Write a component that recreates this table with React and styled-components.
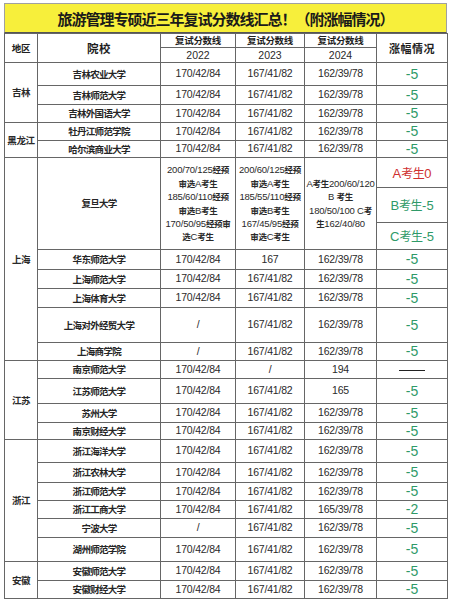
import React from "react";
import styled, { createGlobalStyle } from "styled-components";

const GlobalStyle = createGlobalStyle`
  html, body {
    margin: 0;
    padding: 0;
    background: #ffffff;
  }
  body {
    font-family: "Noto Sans CJK SC", sans-serif;
    color: #222222;
  }
`;

const NUM_FONT = `"Liberation Sans", "Noto Sans CJK SC", sans-serif`;
const CJK_FONT = `"Noto Sans CJK SC", sans-serif`;

const Page = styled.div`
  width: 451px;
  padding: 3px 4px 0 4px;
  box-sizing: border-box;
`;

const Title = styled.div`
  height: 30px;
  box-sizing: border-box;
  background: #f7ef3b;
  border: 1.5px solid #a0a0a0;
  border-bottom: 1px solid #555555;
  display: flex;
  align-items: center;
  justify-content: center;
  font-family: ${CJK_FONT};
  font-weight: 700;
  font-size: 15px;
  letter-spacing: -1px;
  color: #1a1a1a;
`;

const Table = styled.table`
  width: 443px;
  table-layout: fixed;
  border-collapse: collapse;
  border: 1.5px solid #a0a0a0;
  border-top: none;
`;

const Row = styled.tr`
  height: ${(p) => p.$h}px;
`;

const Cell = styled.td`
  padding: 0;
  border: 1px solid #666666;
  text-align: center;
  vertical-align: middle;
  line-height: 13px;
  white-space: nowrap;
`;

const HeadCell = styled(Cell)`
  font-family: ${CJK_FONT};
  font-weight: 700;
  font-size: ${(p) => p.$size || 9.5}px;
  letter-spacing: ${(p) => (p.$size > 10 ? 0.5 : -0.3)}px;
  color: #1e1e1e;
`;

const YearCell = styled(Cell)`
  font-family: ${NUM_FONT};
  font-size: 10.5px;
  color: #2a2a2a;
`;

const RegionCell = styled(Cell)`
  font-family: ${CJK_FONT};
  font-weight: 700;
  font-size: 9.5px;
  letter-spacing: -0.4px;
  color: #2a2a2a;
`;

const SchoolCell = styled(Cell)`
  font-family: ${CJK_FONT};
  font-weight: 700;
  font-size: 9.5px;
  letter-spacing: -0.7px;
  color: #262626;
`;

const ScoreCell = styled(Cell)`
  font-family: ${NUM_FONT};
  font-size: ${(p) => (p.$multi ? 9.5 : 10.5)}px;
  letter-spacing: -0.2px;
  line-height: 13.4px;
  color: #2a2a2a;
`;

const Han = styled.span`
  font-family: ${CJK_FONT};
  font-weight: 700;
  font-size: 8.5px;
  letter-spacing: -0.3px;
`;

const ChangeCell = styled(Cell)`
  font-family: ${NUM_FONT};
  font-size: ${(p) => (p.$small ? 13 : 14)}px;
  color: ${(p) => (p.$tone === "red" ? "#cf2f2f" : "#2f9a68")};
`;

const ChangeHan = styled.span`
  font-family: ${CJK_FONT};
  font-size: 12px;
  letter-spacing: -0.5px;
`;

const Dash = styled.span`
  display: inline-block;
  width: 26px;
  height: 1.5px;
  background: #222222;
  vertical-align: middle;
`;

const isHan = (s) => /[\u4e00-\u9fff]/.test(s);

const mix = (text, Wrap) =>
  text
    .split(/([\u4e00-\u9fff]+)/)
    .filter(Boolean)
    .map((part, i) => (isHan(part) ? <Wrap key={i}>{part}</Wrap> : part));

const std = ["170/42/84", "167/41/82", "162/39/78"];

const groups = [
  {
    region: "吉林",
    rows: [
      { school: "吉林农业大学", scores: std, change: "-5", h: 23 },
      { school: "吉林师范大学", scores: std, change: "-5", h: 19 },
      { school: "吉林外国语大学", scores: std, change: "-5", h: 18 },
    ],
  },
  {
    region: "黑龙江",
    rows: [
      { school: "牡丹江师范学院", scores: std, change: "-5", h: 18 },
      { school: "哈尔滨商业大学", scores: std, change: "-5", h: 17 },
    ],
  },
  {
    region: "上海",
    rows: [
      {
        school: "复旦大学",
        scores: [
          ["200/70/125经预", "审选A考生", "185/60/110经预", "审选B考生", "170/50/95经预审", "选C考生"],
          ["200/60/125经预", "审选A考生", "185/55/110经预", "审选B考生", "167/45/95经预", "审选C考生"],
          ["A考生200/60/120", "B 考生", "180/50/100 C考", "生162/40/80"],
        ],
        multi: [
          { text: "A考生0", tone: "red", h: 30 },
          { text: "B考生-5", tone: "green", h: 35 },
          { text: "C考生-5", tone: "green", h: 27 },
        ],
      },
      { school: "华东师范大学", scores: ["170/42/84", "167", "162/39/78"], change: "-5", h: 20 },
      { school: "上海师范大学", scores: std, change: "-5", h: 19 },
      { school: "上海体育大学", scores: std, change: "-5", h: 19 },
      { school: "上海对外经贸大学", scores: ["/", "167/41/82", "162/39/78"], change: "-5", h: 35 },
      { school: "上海商学院", scores: ["/", "167/41/82", "162/39/78"], change: "-5", h: 18 },
    ],
  },
  {
    region: "江苏",
    rows: [
      { school: "南京师范大学", scores: ["170/42/84", "/", "194"], change: null, h: 18 },
      { school: "江苏师范大学", scores: ["170/42/84", "167/41/82", "165"], change: "-5", h: 25 },
      { school: "苏州大学", scores: std, change: "-5", h: 19 },
      { school: "南京财经大学", scores: std, change: "-5", h: 17 },
    ],
  },
  {
    region: "浙江",
    rows: [
      { school: "浙江海洋大学", scores: std, change: "-5", h: 23 },
      { school: "浙江农林大学", scores: std, change: "-5", h: 20 },
      { school: "浙江师范大学", scores: std, change: "-5", h: 18 },
      { school: "浙江工商大学", scores: ["170/42/84", "167/41/82", "165/39/78"], change: "-2", h: 18 },
      { school: "宁波大学", scores: ["/", "167/41/82", "162/39/78"], change: "-5", h: 19 },
      { school: "湖州师范学院", scores: std, change: "-5", h: 24 },
    ],
  },
  {
    region: "安徽",
    rows: [
      { school: "安徽师范大学", scores: std, change: "-5", h: 19 },
      { school: "安徽财经大学", scores: std, change: "-5", h: 18 },
    ],
  },
];

const spanOf = (rows) => rows.reduce((n, r) => n + (r.multi ? r.multi.length : 1), 0);

const ScoreLines = ({ lines }) =>
  lines.map((line, i) => (
    <React.Fragment key={i}>
      {i > 0 && <br />}
      {mix(line, Han)}
    </React.Fragment>
  ));

const GroupRows = ({ group }) => {
  const out = [];
  group.rows.forEach((row, i) => {
    const first = i === 0 && (
      <RegionCell rowSpan={spanOf(group.rows)}>{group.region}</RegionCell>
    );
    if (row.multi) {
      out.push(
        <Row key={row.school} $h={row.multi[0].h}>
          {first}
          <SchoolCell rowSpan={row.multi.length}>{row.school}</SchoolCell>
          {row.scores.map((lines, j) => (
            <ScoreCell key={j} $multi rowSpan={row.multi.length}>
              <ScoreLines lines={lines} />
            </ScoreCell>
          ))}
          <ChangeCell $small $tone={row.multi[0].tone}>
            {mix(row.multi[0].text, ChangeHan)}
          </ChangeCell>
        </Row>
      );
      row.multi.slice(1).forEach((m) => {
        out.push(
          <Row key={row.school + m.text} $h={m.h}>
            <ChangeCell $small $tone={m.tone}>
              {mix(m.text, ChangeHan)}
            </ChangeCell>
          </Row>
        );
      });
    } else {
      out.push(
        <Row key={row.school} $h={row.h}>
          {first}
          <SchoolCell>{row.school}</SchoolCell>
          {row.scores.map((s, j) => (
            <ScoreCell key={j}>{s}</ScoreCell>
          ))}
          <ChangeCell $tone="green">{row.change ? row.change : <Dash />}</ChangeCell>
        </Row>
      );
    }
  });
  return out;
};

const App = () => {
  return (
    <>
      <GlobalStyle />
      <Page>
        <Title>旅游管理专硕近三年复试分数线汇总！（附涨幅情况）</Title>
        <Table>
          <colgroup>
            <col style={{ width: 33 }} />
            <col style={{ width: 123 }} />
            <col style={{ width: 75 }} />
            <col style={{ width: 69 }} />
            <col style={{ width: 72 }} />
            <col style={{ width: 71 }} />
          </colgroup>
          <tbody>
            <Row $h={14}>
              <HeadCell rowSpan={2}>地区</HeadCell>
              <HeadCell rowSpan={2} $size={11.5}>院校</HeadCell>
              <HeadCell>复试分数线</HeadCell>
              <HeadCell>复试分数线</HeadCell>
              <HeadCell>复试分数线</HeadCell>
              <HeadCell rowSpan={2} $size={11}>涨幅情况</HeadCell>
            </Row>
            <Row $h={15}>
              <YearCell>2022</YearCell>
              <YearCell>2023</YearCell>
              <YearCell>2024</YearCell>
            </Row>
            {groups.map((g) => (
              <GroupRows key={g.region} group={g} />
            ))}
          </tbody>
        </Table>
      </Page>
    </>
  );
};

export default App;
